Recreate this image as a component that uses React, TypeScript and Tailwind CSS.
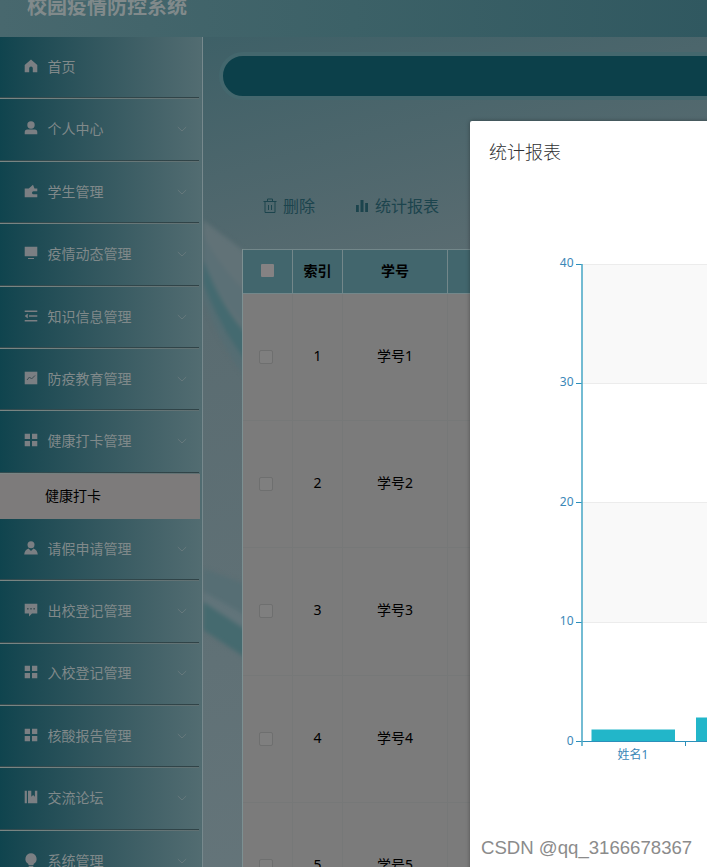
import React from "react";

const menu = [
	{ label: "首页", icon: "home" },
	{ label: "个人中心", icon: "user", arrow: true },
	{ label: "学生管理", icon: "wallet", arrow: true },
	{ label: "疫情动态管理", icon: "screen", arrow: true },
	{ label: "知识信息管理", icon: "fold", arrow: true },
	{ label: "防疫教育管理", icon: "chart", arrow: true },
	{ label: "健康打卡管理", icon: "grid", arrow: true, child: "健康打卡" },
	{ label: "请假申请管理", icon: "person", arrow: true },
	{ label: "出校登记管理", icon: "chat", arrow: true },
	{ label: "入校登记管理", icon: "grid", arrow: true },
	{ label: "核酸报告管理", icon: "grid", arrow: true },
	{ label: "交流论坛", icon: "book", arrow: true },
	{ label: "系统管理", icon: "bulb", arrow: true },
];

const icons: Record<string, React.ReactNode> = {
	home: <path d="M7 .5 13.3 6v7.2H8.8V9.2a1.8 1.8 0 0 0-3.6 0v4H.7V6z" />,
	user: (
		<>
			<circle cx="7" cy="4" r="3.7" />
			<path d="M.7 13.3v-2.1a2.6 2.6 0 0 1 2.6-2.6h7.4a2.6 2.6 0 0 1 2.6 2.6v2.1z" />
		</>
	),
	wallet: (
		<path d="M.7 4.5h4L9 .8l1.5 3.7h2.8v2.7H9.5a1.4 1.4 0 0 0 0 3h3.8v3H.7z" />
	),
	screen: <path d="M.7.7h12.6v9.6H.7zM4 12h6v1H4z" />,
	fold: <path d="M.7 1.5h12.6v1.4H.7zM5 6.3h8.3v1.4H5zM.7 11.1h12.6v1.4H.7zM3.8 4.5v5L.7 7z" />,
	chart: (
		<>
			<path d="M.7.7h12.6v12.6H.7z" />
			<path d="m3 9 2.5-3 2 2L11 4.5" fill="none" stroke="#3a4c52" />
		</>
	),
	grid: <path d="M.7.7H6v5.2H.7zM8 .7h5.3v5.2H8zM.7 8.1H6v5.2H.7zM8 8.1h5.3v5.2H8z" />,
	person: (
		<>
			<circle cx="7" cy="3.8" r="3.5" />
			<path d="M4.5 7.4 7 10l2.5-2.6c2.8 1 4 3 4.3 6H.2c.3-3 1.5-5 4.3-6z" />
		</>
	),
	chat: (
		<>
			<path d="M.7.7h12.6v9.8H8L5 13.5v-3H.7z" />
			<path d="M3 5h1.6v1.4H3zM6.2 5h1.6v1.4H6.2zM9.4 5H11v1.4H9.4z" fill="#3f5257" />
		</>
	),
	book: <path d="M.7.7h2.2v12.6H.7zM4 .7h3.3v6l1.8-1.6 1.8 1.6v-6h2.4v12.6H4z" />,
	bulb: <path d="M7 .2a5.7 5.7 0 0 1 2.6 10.7V12H4.4v-1.1A5.7 5.7 0 0 1 7 .2zM4.7 12.8h4.6v1.2H4.7z" />,
};

const Sidebar = () => {
	return (
		<div className="h-[831px] w-[203px] shrink-0 overflow-hidden border-r border-[#77898d] bg-[#506b70] pr-px">
			{menu.map((item) => (
				<div key={item.label}>
					<div className="flex h-[62.4px] flex-col bg-linear-to-r from-[#0f444e] to-[#526c71] text-[#80898a]">
						<div className="flex flex-1 items-center pb-[0.5px] pl-6">
							<svg
								viewBox="0 0 14 14"
								className="-mt-0.5 mr-[9.5px] h-3.5 w-3.5"
								fill="#7b7f83"
							>
								{icons[item.icon]}
							</svg>
							<span className="flex-1 text-sm leading-5">{item.label}</span>
							{item.arrow && (
								<svg
									viewBox="0 0 10 10"
									className="mr-3.5 h-2.5 w-2.5"
									fill="none"
									stroke="#66797c"
								>
									<path d="m.8 3 4.2 4 4.2-4" />
								</svg>
							)}
						</div>
						<div className="h-px w-[199px] bg-linear-to-r from-[#344c50] to-[#304347]" />
						<div className="h-px w-[199px] bg-linear-to-r from-[#7a8684] to-[#5f7072]" />
					</div>
					{item.child && (
						<div className="flex h-[45px] w-[200px] items-center bg-[#7d7b7b] pl-[45px] text-sm text-black">
							{item.child}
						</div>
					)}
				</div>
			))}
		</div>
	);
};

const Table = () => {
	return (
		<div className="ml-[39px] w-[500px] border-l border-[#7d9092]">
			<div className="flex h-[45px] border-y border-[#73878a] bg-[#42666d] text-sm font-bold text-black">
				<div className="flex w-[50px] items-center justify-center border-r border-[#73878a] pb-0.5">
					<div className="h-[13px] w-[13px] rounded-[1px] bg-[#858283]" />
				</div>
				<div className="flex w-[50px] items-center justify-center border-r border-[#73878a] pb-0.5">
					索引
				</div>
				<div className="flex w-[105px] items-center justify-center border-r border-[#73878a] pb-0.5">
					学号
				</div>
			</div>
			{[1, 2, 3, 4, 5].map((n) => (
				<div
					key={n}
					className="flex h-[127.2px] border-b border-[#767878] bg-[#7b7b7b] text-sm text-black"
				>
					<div className="flex w-[50px] items-center justify-center border-r border-[#767878] pr-1">
						<div className="h-3.5 w-3.5 rounded-xs border border-[#6e6f6f] bg-[#7f7f7f]" />
					</div>
					<div className="flex w-[50px] items-center justify-center border-r border-[#767878] pb-0.5">
						{n}
					</div>
					<div className="flex w-[105px] items-center justify-center border-r border-[#767878] pb-0.5">
						学号{n}
					</div>
				</div>
			))}
		</div>
	);
};

const Chart = () => {
	return (
		<svg
			className="absolute top-[121px] left-[80px]"
			width="160"
			height="540"
			fontSize="12"
			fill="#3a87b7"
		>
			{/* alternating bands every ten units */}
			<path d="M32 22h128v119H32zM32 260h128v120H32z" fill="#f9f9f9" />
			<path d="M32 22.5h128M32 141.5h128M32 260.5h128M32 380.5h128" stroke="#ececec" />
			<path d="M41.5 487.5h83.5v12H41.5zM146 475.5h14v24h-14z" fill="#22b6c9" />
			<path
				d="M26 22.5h6M26 141.5h6M26 260.5h6M26 380.5h6M26 499.5h134M135.5 499v5"
				stroke="#2c8fba"
				fill="none"
			/>
			<path d="M32 22v482" stroke="#51abc8" strokeWidth="1.6" />
			{[40, 30, 20, 10, 0].map((n, i) => (
				<text key={n} x="23.5" y={25 + i * 119.4} textAnchor="end">
					{n}
				</text>
			))}
			<text x="83" y="516.5" textAnchor="middle">
				姓名1
			</text>
		</svg>
	);
};

const App = () => {
	return (
		<div className="relative h-[867px] w-[707px] overflow-hidden bg-[#657379] font-['Noto_Sans','Noto_Sans_CJK_SC',sans-serif]">
			<div className="h-[37px] bg-linear-to-r from-[#48686e] via-[#3c6167] to-[#305860] pl-7">
				<h1 className="-ml-px -translate-y-[7px] text-xl leading-7 font-bold text-[#818a8b]">
					校园疫情防控系统
				</h1>
			</div>
			<div className="flex">
				<Sidebar />
				<div className="relative h-[830px] flex-1 overflow-hidden bg-linear-165 from-[#3e6067] via-[#5a6c71] via-30% to-[#66767b]">
					{/* background ribbons */}
					<svg className="absolute inset-0 blur-[2px]" width="504" height="830">
						<path d="M-4 180 46 218v120L-4 245z" fill="#617277" />
						<path d="M-4 190Q15 230 46 258v36Q20 266-4 220z" fill="#5b7076" />
						<path d="M-4 212Q16 268 46 300v28Q17 293-4 236z" fill="#446a70" />
						<path d="M-4 236Q17 293 46 328v16Q17 311-4 250z" fill="#556d73" />
						<path d="M-4 530 46 548v32L-4 552z" fill="#566e74" />
						<path d="M-4 552 46 580v18L-4 566z" fill="#61747a" />
						<path d="M-4 562 46 595v28L-4 590z" fill="#456a6f" />
					</svg>
					<div className="relative flex flex-col pt-[15px]">
						<div className="ml-4 h-[48px] w-[600px] rounded-full border-4 border-[#44676d] bg-[#0c404a]" />
						<div className="mt-[94px] mb-[31px] ml-[60px] flex h-6 items-center text-base text-[#1c444d]">
							<svg
								viewBox="0 0 14 16"
								className="mr-1.5 h-4 w-3.5"
								fill="none"
								stroke="currentColor"
							>
								<path d="M.5 3.5h13M4.5 3V1h5v2M2 4v10.5h10V4M5.5 7v5M8.5 7v5" />
							</svg>
							<span className="mr-10">删除</span>
							<svg viewBox="0 0 14 14" className="mr-1.5 h-3.5 w-3.5" fill="currentColor">
								<path d="M1 6h2.8v7H1zM5.5 1h3v12h-3zM10.2 4H13v9h-2.8z" />
							</svg>
							<span>统计报表</span>
						</div>
						<Table />
					</div>
				</div>
			</div>
			<div className="absolute top-[121px] left-[470px] h-[760px] w-[400px] rounded-xs bg-white shadow-[0_0_4px_rgba(0,0,0,0.35)]">
				<h2 className="pt-[17px] pl-[19px] text-lg leading-7 font-light text-[#303133]">
					统计报表
				</h2>
				<Chart />
			</div>
			<div className="absolute top-[836px] left-[481px] font-['Liberation_Sans'] text-[18.6px] leading-6 text-[#8b8b8b]">
				CSDN @qq_3166678367
			</div>
		</div>
	);
};

export default App;
